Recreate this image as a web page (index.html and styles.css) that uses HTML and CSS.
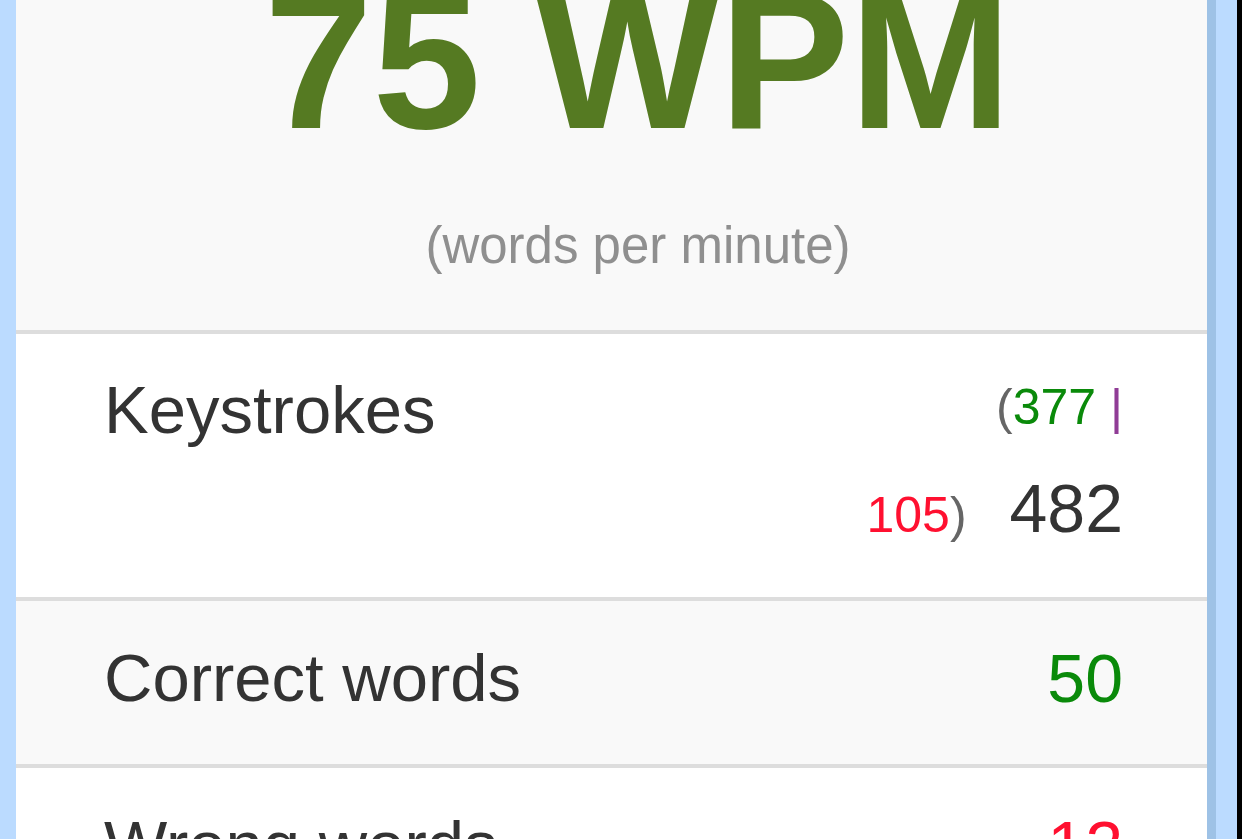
FILE: index.html
```html
<!DOCTYPE html>
<html lang="en">
<head>
<meta charset="utf-8">
<title>Typing test result</title>
<link rel="stylesheet" href="styles.css">
</head>
<body>
<div class="frame">
  <div class="gutter-left"></div>
  <main class="panel">
    <header class="speed">
      <div class="wpm">75 WPM</div>
      <div class="unit">(words per minute)</div>
    </header>
    <div class="row row-white row-keys">
      <div class="label">Keystrokes</div>
      <div class="value">
        <div class="ks-line1"><span class="paren">(</span><span class="ok">377</span> <span class="bar">|</span></div>
        <div class="ks-line2"><span class="small"><span class="bad">105</span><span class="paren">)</span></span><span class="total">482</span></div>
      </div>
    </div>
    <div class="row row-gray">
      <div class="label">Correct words</div>
      <div class="value ok">50</div>
    </div>
    <div class="row row-white">
      <div class="label">Wrong words</div>
      <div class="value bad">12</div>
    </div>
  </main>
  <div class="edge"></div>
  <div class="gutter-right"></div>
  <div class="black"></div>
</div>
</body>
</html>
```

FILE: styles.css
```css
html, body {
  margin: 0;
  padding: 0;
  height: 100%;
  overflow: hidden;
}
body {
  background: #bbdbff;
  font-family: "Liberation Sans", Arial, sans-serif;
  color: #333;
}
.frame {
  display: flex;
  height: 839px;
  overflow: hidden;
}
.gutter-left {
  width: 16px;
  flex: none;
  background: #bbdbff;
}
.panel {
  width: 1191px;
  flex: none;
  background: #fff;
  display: flex;
  flex-direction: column;
}
.edge {
  width: 9px;
  flex: none;
  background: #9ec2e6;
}
.gutter-right {
  width: 21px;
  flex: none;
  background: #bbdbff;
}
.black {
  width: 5px;
  flex: none;
  background: #000;
}
.speed {
  background: #f9f9f9;
  border-bottom: 4px solid #ddd;
  padding: 0 0 54px 53px;
  text-align: center;
  flex: none;
}
.wpm {
  font-size: 195px;
  font-weight: bold;
  line-height: 120px;
  color: #557a22;
  white-space: nowrap;
}
.unit {
  margin-top: 96px;
  font-size: 51px;
  line-height: 60px;
  color: #8f8f8f;
}
.row {
  display: flex;
  justify-content: space-between;
  align-items: flex-start;
  padding: 29px 84px 38px 88px;
  border-bottom: 4px solid #ddd;
  font-size: 68px;
  line-height: 96px;
  flex: none;
}
.row-white { background: #fff; }
.row-gray { background: #f9f9f9; }
.row-keys {
  padding-top: 28px;
  padding-bottom: 41px;
}
.label {
  color: #333;
  font-size: 67px;
  white-space: nowrap;
}
.value {
  text-align: right;
  color: #333;
  white-space: nowrap;
}
.ks-line1 {
  font-size: 50px;
  line-height: 91px;
  margin-bottom: 7px;
}
.ks-line2 {
  line-height: 96px;
}
.small {
  font-size: 50px;
  line-height: 1;
}
.total {
  margin-left: 43px;
  color: #333;
}
.paren { color: #666; }
.ok { color: #0a8a0a; }
.bad { color: #ff1030; }
.bar { color: #903c96; }
```
